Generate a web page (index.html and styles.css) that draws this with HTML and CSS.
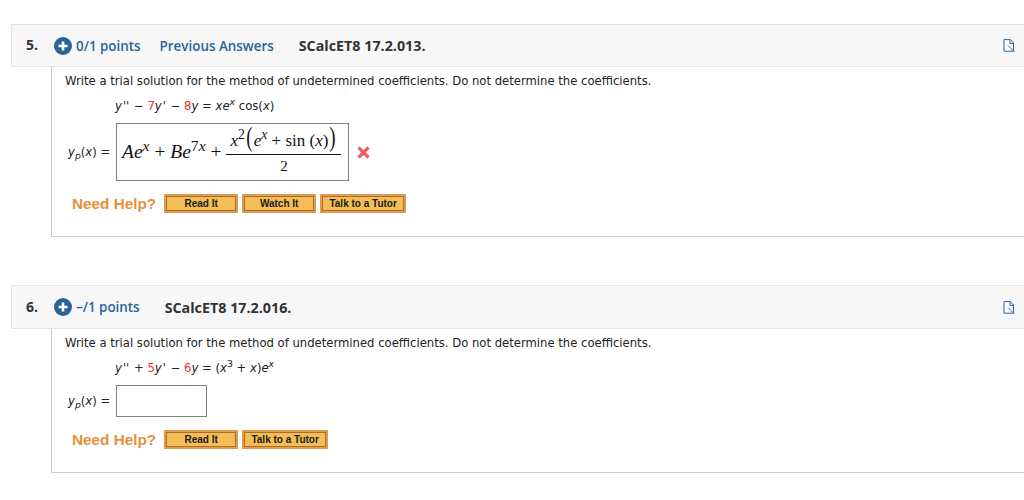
FILE: index.html
```html
<!DOCTYPE html>
<html lang="en">
<head>
  <meta charset="UTF-8" />
  <title>Assignment</title>
  <link rel="stylesheet" href="styles.css">
</head>
<body>

  <section class="question first">
    <header class="q-header">
      <span class="q-num">5.</span>
      <span class="plus">
        <svg width="18" height="18" viewBox="0 0 18 18"><circle cx="9" cy="9" r="9" fill="#2a6496"/><path d="M9 4.5v9M4.5 9h9" stroke="#fff" stroke-width="2.6"/></svg>
      </span>
      <span class="points">0/1 points</span>
      <span class="prev">Previous Answers</span>
      <span class="code">SCalcET8 17.2.013.</span>
      <svg class="note" width="12" height="13" viewBox="0 0 12 13"><path d="M1 .6h6.5L10.5 4v8.2H1z" fill="#fff" stroke="#2a6496"/><path d="M7 1v3.5h3.5M5 6.5l6 6" fill="none" stroke="#2a6496"/></svg>
    </header>
    <div class="q-body">
      <p class="prompt">Write a trial solution for the method of undetermined coefficients. Do not determine the coefficients.</p>
      <p class="equation"><i>y</i><i class="prime">''</i> &minus; <span class="red">7</span><i>y</i><i class="prime">'</i> &minus; <span class="red">8</span><i>y</i> = <i>xe<sup>x</sup></i> cos(<i>x</i>)</p>
      <div class="answer-row">
        <span class="yp"><i>y<sub>p</sub></i>(<i>x</i>) =</span>
        <div class="answer-box filled">
          <span class="math"><i>Ae<sup>x</sup></i> + <i>Be</i><sup>7<i>x</i></sup> +</span>
          <span class="frac">
            <span class="top"><i>x</i><sup>2</sup><span class="paren">(</span><i>e<sup>x</sup></i> + sin (<i>x</i>)<span class="paren">)</span></span>
            <span class="bottom">2</span>
          </span>
        </div>
        <svg class="wrong" width="13" height="13" viewBox="0 0 13 13"><path d="M1.5 1.5l10 10M11.5 1.5l-10 10" stroke="#e8636b" stroke-width="3.2"/></svg>
      </div>
      <div class="help">
        <span class="need">Need Help?</span>
        <a class="btn">Read It</a>
        <a class="btn">Watch It</a>
        <a class="btn tutor">Talk to a Tutor</a>
      </div>
    </div>
  </section>

  <section class="question second">
    <header class="q-header">
      <span class="q-num">6.</span>
      <span class="plus">
        <svg width="18" height="18" viewBox="0 0 18 18"><circle cx="9" cy="9" r="9" fill="#2a6496"/><path d="M9 4.5v9M4.5 9h9" stroke="#fff" stroke-width="2.6"/></svg>
      </span>
      <span class="points">&ndash;/1 points</span>
      <span class="code">SCalcET8 17.2.016.</span>
      <svg class="note" width="12" height="13" viewBox="0 0 12 13"><path d="M1 .6h6.5L10.5 4v8.2H1z" fill="#fff" stroke="#2a6496"/><path d="M7 1v3.5h3.5M5 6.5l6 6" fill="none" stroke="#2a6496"/></svg>
    </header>
    <div class="q-body">
      <p class="prompt">Write a trial solution for the method of undetermined coefficients. Do not determine the coefficients.</p>
      <p class="equation"><i>y</i><i class="prime">''</i> + <span class="red">5</span><i>y</i><i class="prime">'</i> &minus; <span class="red">6</span><i>y</i> = (<i>x</i><sup>3</sup> + <i>x</i>)<i>e<sup>x</sup></i></p>
      <div class="answer-row">
        <span class="yp"><i>y<sub>p</sub></i>(<i>x</i>) =</span>
        <div class="answer-box empty"></div>
      </div>
      <div class="help">
        <span class="need">Need Help?</span>
        <a class="btn">Read It</a>
        <a class="btn tutor">Talk to a Tutor</a>
      </div>
    </div>
  </section>

</body>
</html>
```

FILE: styles.css
```css
* {
  margin: 0;
  padding: 0;
  box-sizing: border-box;
}

html, body {
  background: #fff;
  height: 500px;
  overflow: hidden;
}

body {
  font-family: "DejaVu Sans", sans-serif;
  font-size: 11.63px;
  color: #222;
  padding: 24px 0 0 11px;
}

.question { margin-bottom: 48px; }

.q-header {
  height: 43px;
  display: flex;
  align-items: center;
  background: #f7f7f7;
  border: 1px solid #e6e6e6;
  border-right: none;
  font-family: "Open Sans", sans-serif;
  font-size: 13.4px;
  font-weight: 600;
  padding-left: 14px;
}

.second .q-header { height: 44px; }

.q-num {
  width: 28px;
  color: #333;
  font-size: 14px;
  font-weight: 700;
  position: relative;
  top: -1px;
}

.plus {
  display: flex;
  margin-right: 4px;
}

.points { color: #2a6496; margin-right: 19px; }
.prev { color: #2a6496; margin-right: 25px; }
.second .points { margin-right: 25px; }

.code {
  color: #333;
  font-size: 14.3px;
  font-weight: 700;
}

.note {
  margin-left: auto;
  margin-right: 9px;
}

.q-body {
  margin-left: 40px;
  border-left: 1px solid #ccc;
  border-bottom: 1px solid #ccc;
  padding: 7px 0 0 13px;
}

.first .q-body { height: 170px; }
.second .q-body { height: 144px; }

.prompt { line-height: 15px; }

.equation {
  margin: 9px 0 0 50px;
  line-height: 17px;
}

.prime { margin: 0 1px; }

.red { color: #e8322c; }

sup, sub {
  font-size: 0.8em;
  line-height: 0;
}

.answer-row {
  display: flex;
  align-items: center;
  margin-top: 8px;
}

.yp {
  width: 48px;
  margin-left: 3px;
  white-space: nowrap;
}

.answer-box {
  border: 1px solid #808080;
  background: #fff;
}

.answer-box.filled {
  width: 233px;
  height: 58px;
  display: flex;
  align-items: center;
  padding-left: 5px;
  font-family: "Liberation Serif", serif;
  font-size: 19.5px;
  color: #111;
}

.answer-box.empty {
  width: 91px;
  height: 32px;
}

.math {
  white-space: pre;
  margin-right: 5px;
}

.frac {
  display: inline-flex;
  flex-direction: column;
  align-items: center;
  width: 115px;
  white-space: nowrap;
  font-size: 17px;
}

.frac .top {
  border-bottom: 1px solid #111;
  width: 100%;
  text-align: center;
  line-height: 26px;
}

.frac .bottom {
  line-height: 22px;
  font-size: 15px;
}

.paren {
  display: inline-block;
  font-size: 27px;
  line-height: 0;
  transform: scaleX(0.7);
}

.wrong { margin-left: 8px; }

.help {
  display: flex;
  align-items: center;
  gap: 4px;
  margin-top: 13px;
  padding-left: 7px;
}

.need {
  font-family: "Liberation Sans", sans-serif;
  font-size: 15.3px;
  font-weight: 700;
  color: #e88f3a;
  margin-right: 4px;
}

.btn {
  width: 74px;
  height: 19px;
  display: flex;
  align-items: center;
  justify-content: center;
  font-family: "Liberation Sans", sans-serif;
  font-size: 10px;
  font-weight: 700;
  color: #1a1a1a;
  background: #f5bd56;
  border: 2px solid #e39a4e;
  box-shadow: inset 0 0 0 1px #a8702c;
}

.btn.tutor { width: 86px; }
```
